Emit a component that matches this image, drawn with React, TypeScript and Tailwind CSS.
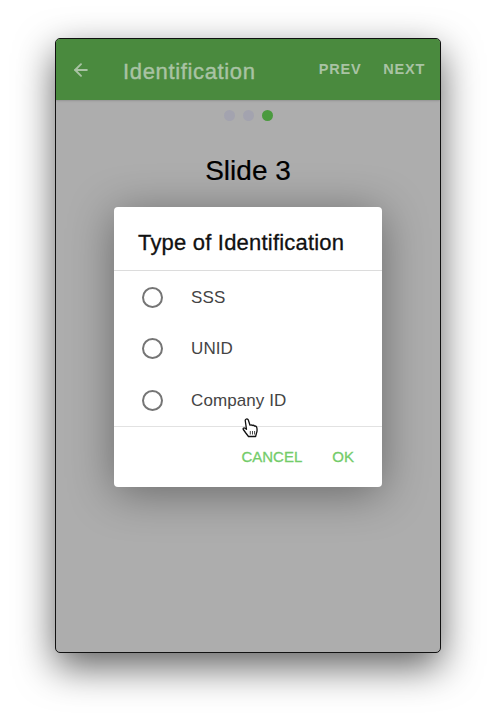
import { ArrowLeft } from 'lucide-react';

const options = ['SSS', 'UNID', 'Company ID'];

const HandCursor = () => (
  <svg width="17" height="21" viewBox="0 0 17 21" className="absolute left-[128px] top-[211px]">
    <path
      d="M4 1.2c1-.6 2 0 2.4 1L8 7.2c.8-.5 1.8-.4 2.3.3.8-.4 1.700-.2 2.200.6.900-.3 1.800.2 2.100 1 .6 1.700.6 4-.1 6l-.9 3.400H6.500L3.800 15 1.300 11.500c-.5-.9.3-1.900 1.300-1.500l1.900 1.300L3.300 3c-.2-.7.1-1.400.7-1.800z"
      fill="#fff"
      stroke="#111"
      strokeWidth="1.300"
      strokeLinejoin="round"
    />
    <path d="M8.300 13v3.500M10.500 13v3.500M12.600 13v3.500" stroke="#333" strokeWidth="0.900" />
  </svg>
);

export default function App() {
  return (
    <div className="w-[496px] h-[726px] bg-white overflow-hidden pl-[55px] pt-[38px] font-['Liberation_Sans',Arial,sans-serif]">
      <div className="relative w-[386px] h-[615px] flex flex-col items-center rounded-[5px] border border-[#111] bg-[#adadad] shadow-[0_14px_38px_rgba(0,0,0,0.62)]">
        <header className="w-full h-[61px] flex items-center bg-[#4a8a3e] rounded-t-[4px] shadow-[0_1px_2px_rgba(0,0,0,0.15)] text-[#a9c3a4]">
          <ArrowLeft className="w-[20px] h-[20px] ml-[15px]" strokeWidth={2.300} />
          <h1 className="ml-[32px] mt-[3px] text-[22px] tracking-[0.65px] [-webkit-text-stroke:0.4px_#a9c3a4]">Identification</h1>
          <div className="ml-auto mr-[15px] mt-[1px] flex gap-[22px] text-[14.500px] font-bold tracking-[0.75px]">
            <span>PREV</span>
            <span>NEXT</span>
          </div>
        </header>

        <div className="mt-[10px] flex gap-[8px]">
          <span className="w-[11px] h-[11px] rounded-full bg-[#a3a3af]" />
          <span className="w-[11px] h-[11px] rounded-full bg-[#a3a3af]" />
          <span className="w-[11px] h-[11px] rounded-full bg-[#4a9a3e]" />
        </div>

        <h2 className="mt-[34px] text-[28px] leading-[32px] text-black [-webkit-text-stroke:0.2px_#000]">Slide 3</h2>

        <div className="absolute left-[58px] top-[168px] w-[268px] h-[280px] flex flex-col rounded-[4px] bg-white shadow-[0_6px_45px_rgba(0,0,0,0.4)]">
          <div className="h-[64px] shrink-0 flex items-center pl-[24px] pt-[7px] border-b border-[#dcdcdc] text-[22px] tracking-[0.2px] text-[#111] [-webkit-text-stroke:0.3px_#111]">
            Type of Identification
          </div>
          <div className="h-[156px] shrink-0 flex flex-col border-b border-[#e2e2e2] pt-[1px]">
            {options.map(opt => (
              <div key={opt} className="h-[51.5px] flex items-center pl-[28px]">
                <span className="w-[21px] h-[21px] rounded-full border-2 border-[#757575]" />
                <span className="ml-[28px] text-[17px] tracking-[0.1px] text-[#444]">{opt}</span>
              </div>
            ))}
          </div>
          <div className="flex-1 flex items-center justify-end gap-[30px] pr-[28px] text-[15px] text-[#73cc6a] [-webkit-text-stroke:0.3px_#73cc6a]">
            <span>CANCEL</span>
            <span>OK</span>
          </div>
          <HandCursor />
        </div>
      </div>
    </div>
  );
}
